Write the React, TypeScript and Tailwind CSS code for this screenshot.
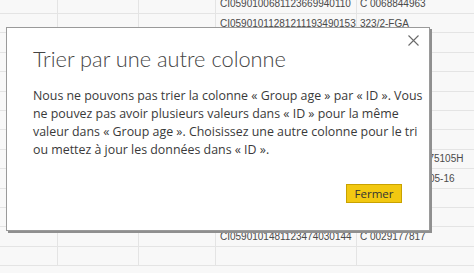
const rows: { id: string; code: string }[] = [
  { id: "CI0590100681123669940110", code: "C 0068844963" },
  { id: "CI05901011281211193490153", code: "323/2-FGA" },
  { id: "CI0590101281123411260128", code: "C 0031802557" },
  { id: "CI0590101381123502190120", code: "C 0040617302" },
  { id: "CI0590101581123496030131", code: "C 0047120833" },
  { id: "CI0590101681123668120114", code: "C 0052901176" },
  { id: "CI0590101281123530040152", code: "C 0061124470" },
  { id: "CI0590101381123612310106", code: "C 0044810239" },
  { id: "CI0590101881123547160127", code: "CI05901026 2675105H" },
  { id: "CI0590101981123623200135", code: "C 0013201605-05-16" },
  { id: "CI0590101081123578090143", code: "" },
  { id: "CI0590101781123597720117", code: "C 0035150480" },
  { id: "CI0590101481123474030144", code: "C 0029177817" },
  { id: "", code: "" },
];

function Sheet() {
  return (
    <div className="-mt-[5.4px] bg-[#f8f8f8]">
      {rows.map((r, i) => (
        <div
          key={i}
          className="flex h-[19.4px] items-center border-b border-[#e4e4e4] text-[10px] text-[#4a4a4a]"
          style={{ fontFamily: '"Liberation Sans", Arial, sans-serif' }}
        >
          <div className="h-full w-[58px] shrink-0 border-r border-[#e4e4e4]" />
          <div className="h-full w-[81px] shrink-0 border-r border-[#e4e4e4]" />
          <div className="h-full w-[77px] shrink-0 border-r border-[#e4e4e4]" />
          <div className="flex h-full w-[141px] shrink-0 items-center whitespace-nowrap border-r border-[#e4e4e4] pl-[4px]">
            {r.id}
          </div>
          <div className="flex h-full w-[140px] shrink-0 items-center whitespace-nowrap pl-[3px]">
            {r.code}
          </div>
        </div>
      ))}
    </div>
  );
}

function Dialog() {
  return (
    <div
      className="absolute left-[6px] top-[27px] h-[204px] w-[424px] border border-[#9a9a9a] bg-white pl-[26px] pt-[17px] shadow-[2px_2px_0_0_#8f8f8f]"
      style={{ fontFamily: '"Open Sans", "Noto Sans", sans-serif' }}
    >
      <button className="absolute right-[9px] top-[5px] flex h-[14px] w-[14px] items-center justify-center">
        <svg width="11" height="11" viewBox="0 0 11 11">
          <path d="M0.5 0.5 L10.5 10.5 M10.5 0.5 L0.5 10.5" stroke="#6a6a6a" strokeWidth="1.1" fill="none" />
        </svg>
      </button>
      <h1 className="text-[21.8px] font-light leading-[28px] text-[#444]" style={{ fontFamily: "Lato, sans-serif" }}>
        Trier par une autre colonne
      </h1>
      <p className="mt-[14px] text-[12.4px] leading-[18px] text-[#3a3a3a]">
        Nous ne pouvons pas trier la colonne « Group age » par « ID ». Vous
        <br />
        ne pouvez pas avoir plusieurs valeurs dans « ID » pour la même
        <br />
        valeur dans « Group age ». Choisissez une autre colonne pour le tri
        <br />
        ou mettez à jour les données dans « ID ».
      </p>
      <div className="mt-[25px] flex justify-end pr-[27px]">
        <button className="h-[19px] w-[56px] border border-[#c9a200] bg-[#f2c811] text-[11.5px] leading-none text-[#333]">
          Fermer
        </button>
      </div>
    </div>
  );
}

export default function App() {
  return (
    <div className="relative h-[273px] w-[474px] overflow-hidden bg-[#f8f8f8]">
      <Sheet />
      <Dialog />
    </div>
  );
}
